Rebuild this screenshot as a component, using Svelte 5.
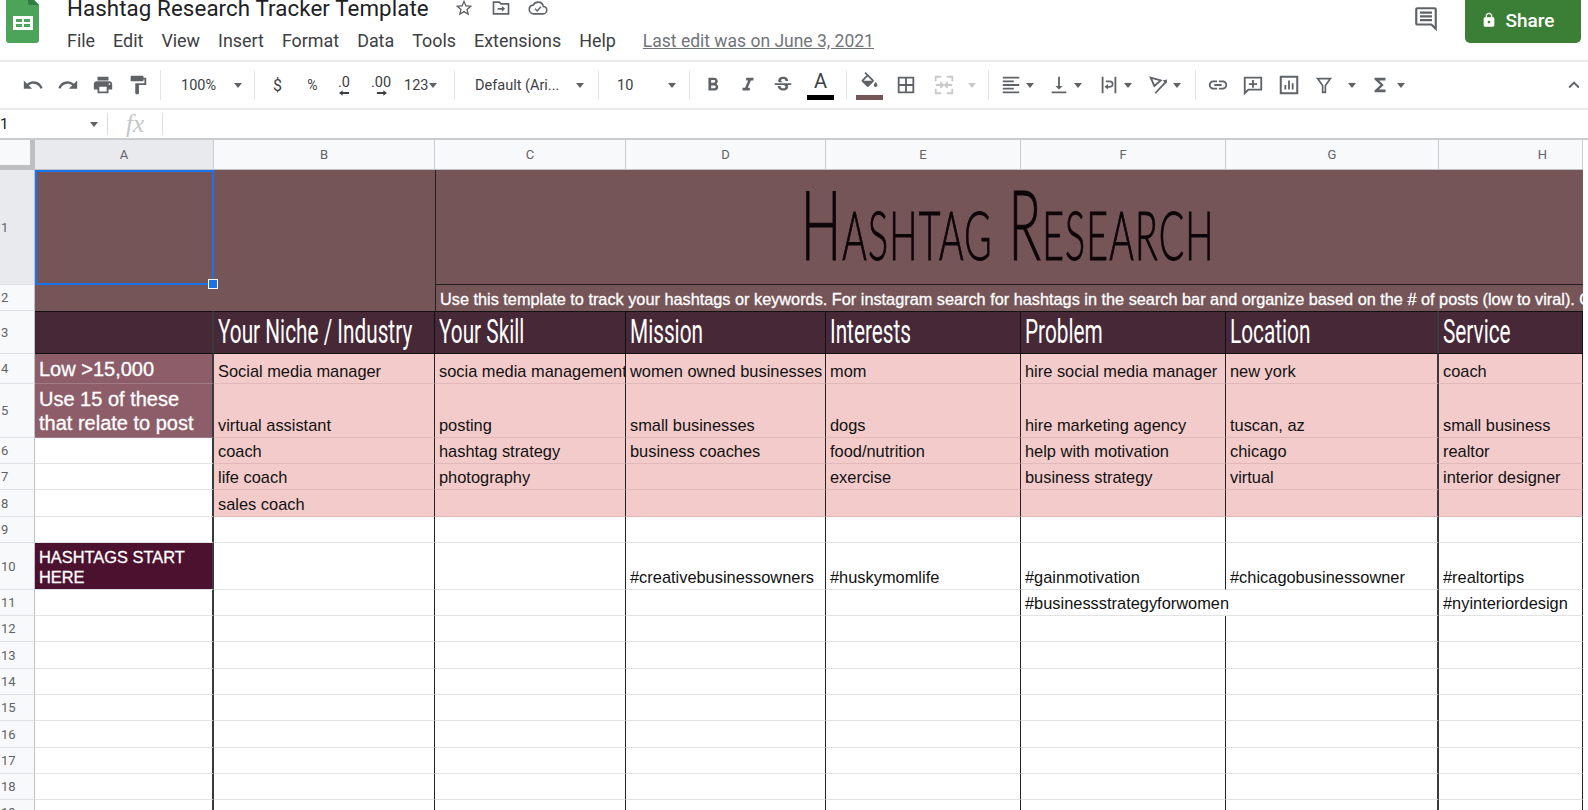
<script>
  const columns = ["A", "B", "C", "D", "E", "F", "G", "H"];
  const menu = ["File", "Edit", "View", "Insert", "Format", "Data", "Tools", "Extensions", "Help"];
  const heads = ["", "Your Niche / Industry", "Your Skill", "Mission", "Interests", "Problem", "Location", "Service"];

  const body = [
    { n: 4, cells: ["Low >15,000", "Social media manager", "socia media management", "women owned businesses", "mom", "hire social media manager", "new york", "coach"] },
    { n: 5, cells: ["Use 15 of these that relate to post", "virtual assistant", "posting", "small businesses", "dogs", "hire marketing agency", "tuscan, az", "small business"] },
    { n: 6, cells: ["", "coach", "hashtag strategy", "business coaches", "food/nutrition", "help with motivation", "chicago", "realtor"] },
    { n: 7, cells: ["", "life coach", "photography", "", "exercise", "business strategy", "virtual", "interior designer"] },
    { n: 8, cells: ["", "sales coach", "", "", "", "", "", ""] },
    { n: 9, cells: ["", "", "", "", "", "", "", ""] },
    { n: 10, cells: ["HASHTAGS START HERE", "", "", "#creativebusinessowners", "#huskymomlife", "#gainmotivation", "#chicagobusinessowner", "#realtortips"] },
    { n: 11, cells: ["", "", "", "", "", "#businessstrategyforwomen", "", "#nyinteriordesign"] }
  ];
  for (let n = 12; n <= 19; n++) body.push({ n, cells: ["", "", "", "", "", "", "", ""] });

  function cellClass(row, i) {
    let c = "cell";
    if (i === 0 || i === 6) c += " thick";
    if (row.n <= 8 && i > 0) c += " pink";
    if (row.n === 4 && i === 0) c += " dusty big";
    if (row.n === 5 && i === 0) c += " dusty big wrap";
    if (row.n === 10 && i === 0) c += " plum wrap";
    if (row.n === 11 && i === 5) c += " spill";
    return c;
  }
</script>

{#snippet caret()}
  <span class="caret"></span>
{/snippet}

{#snippet icon(d, cls = "")}
  <svg class="ico {cls}" viewBox="0 0 24 24"><path d={d} /></svg>
{/snippet}

<div class="app">
  <header class="top">
    <svg class="logo" viewBox="0 0 33 49">
      <path d="M3 0h19l11 11v35a3 3 0 0 1-3 3H3a3 3 0 0 1-3-3V3a3 3 0 0 1 3-3z" fill="#4ca45a" />
      <path d="M22 0l11 11H24a2 2 0 0 1-2-2z" fill="#2f7d3f" />
      <path d="M7 22h20v14H7z" fill="#fff" />
      <path d="M10 25h6v3h-6zM18 25h6v3h-6zM10 30h6v3h-6zM18 30h6v3h-6z" fill="#4ca45a" />
    </svg>
    <div class="doc">
      <div class="title-row">
        <span class="doc-title">Hashtag Research Tracker Template</span>
        <svg class="head-ico star" viewBox="0 0 24 24"><path d="M22 9.24l-7.19-.62L12 2 9.19 8.63 2 9.24l5.46 4.73L5.82 21 12 17.27 18.18 21l-1.63-7.03L22 9.24zM12 15.4l-3.76 2.27 1-4.28-3.32-2.88 4.38-.38L12 6.1l1.71 4.04 4.38.38-3.32 2.88 1 4.28L12 15.4z" /></svg>
        <svg class="head-ico move" viewBox="0 0 24 24"><path d="M3 5h7l2 2h9v12H3z" fill="none" stroke="#5f6368" stroke-width="2" /><path d="M8 12h5v-2.5l4 3.5-4 3.500V14H8z" /></svg>
        <svg class="head-ico cloud" viewBox="0 0 24 24"><path d="M19.350 10.040A7.490 7.490 0 0 0 12 4C9.110 4 6.600 5.640 5.350 8.040A5.994 5.994 0 0 0 0 14c0 3.310 2.690 6 6 6h13c2.760 0 5-2.240 5-5 0-2.640-2.050-4.780-4.650-4.960z" transform="translate(1.500 1.500) scale(.875)" fill="none" stroke="#5f6368" stroke-width="2.200" /><path d="M8.500 13l2.500 2.500 4.500-5" fill="none" stroke="#5f6368" stroke-width="1.800" /></svg>
      </div>
      <nav class="menu">
        {#each menu as item}
          <span>{item}</span>
        {/each}
        <span class="last-edit">Last edit was on June 3, 2021</span>
      </nav>
    </div>
    <svg class="comments" viewBox="0 0 24 24">
      <path d="M4 3h16a1 1 0 0 1 1 1v18l-4-4H4a1 1 0 0 1-1-1V4a1 1 0 0 1 1-1z" fill="none" stroke="#5f6368" stroke-width="2" />
      <path d="M6.500 7h11M6.500 10.500h11M6.500 14h11" stroke="#5f6368" stroke-width="2" />
    </svg>
    <div class="share">
      <svg viewBox="0 0 24 24"><path d="M18 8h-1V6c0-2.760-2.240-5-5-5S7 3.240 7 6v2H6c-1.100 0-2 .9-2 2v10c0 1.100.9 2 2 2h12c1.100 0 2-.9 2-2V10c0-1.100-.9-2-2-2zm-6 9c-1.100 0-2-.9-2-2s.9-2 2-2 2 .9 2 2-.9 2-2 2zm3.100-9H8.900V6c0-1.710 1.390-3.100 3.100-3.100 1.710 0 3.100 1.390 3.100 3.100v2z" /></svg>
      Share
    </div>
  </header>

  <div class="toolbar">
    <div class="btn">{@render icon("M12.5 8c-2.650 0-5.050.99-6.900 2.600L2 7v9h9l-3.620-3.620c1.390-1.160 3.160-1.880 5.120-1.880 3.540 0 6.550 2.310 7.600 5.500l2.370-.78C21.080 11.030 17.150 8 12.500 8z")}</div>
    <div class="btn">{@render icon("M18.400 10.600C16.550 8.990 14.150 8 11.500 8c-4.650 0-8.580 3.030-9.960 7.220L3.900 16c1.050-3.190 4.050-5.500 7.600-5.500 1.950 0 3.730.72 5.120 1.880L13 16h9V7l-3.600 3.600z")}</div>
    <div class="btn">{@render icon("M19 8H5c-1.660 0-3 1.340-3 3v6h4v4h12v-4h4v-6c0-1.660-1.340-3-3-3zm-3 11H8v-5h8v5zm3-7c-.55 0-1-.45-1-1s.45-1 1-1 1 .45 1 1-.45 1-1 1zm-1-9H6v4h12V3z")}</div>
    <div class="btn">{@render icon("M18 4V3c0-.55-.45-1-1-1H5c-.55 0-1 .45-1 1v4c0 .55.45 1 1 1h12c.55 0 1-.45 1-1V6h1v4H9v11c0 .55.45 1 1 1h2c.55 0 1-.45 1-1v-9h8V4h-3z")}</div>
    <i class="sep"></i>
    <div class="pick zoom-pick"><span>100%</span>{@render caret()}</div>
    <i class="sep"></i>
    <div class="btn txt">$</div>
    <div class="btn txt small">%</div>
    <div class="btn dec"><span>.0</span><svg viewBox="0 0 12 6"><path d="M0 3l4-3v2h7v2H4v2z" /></svg></div>
    <div class="btn dec wide"><span>.00</span><svg viewBox="0 0 12 6"><path d="M12 3L8 0v2H1v2h7v2z" /></svg></div>
    <div class="fmt"><span>123</span>{@render caret()}</div>
    <i class="sep"></i>
    <div class="pick font-pick"><span>Default (Ari...</span>{@render caret()}</div>
    <i class="sep"></i>
    <div class="pick size-pick"><span>10</span>{@render caret()}</div>
    <i class="sep"></i>
    <div class="btn">{@render icon("M15.600 10.790c.97-.67 1.650-1.770 1.650-2.790 0-2.260-1.750-4-4-4H7v14h7.040c2.090 0 3.710-1.700 3.710-3.790 0-1.520-.86-2.820-2.150-3.420zM10 6.500h3c.83 0 1.500.67 1.500 1.500s-.67 1.500-1.500 1.500h-3v-3zm3.500 9H10v-3h3.500c.83 0 1.500.67 1.500 1.500s-.67 1.500-1.500 1.500z")}</div>
    <div class="btn">{@render icon("M10 4v3h2.210l-3.420 8H6v3h8v-3h-2.210l3.420-8H18V4z")}</div>
    <div class="btn">{@render icon("M7.240 8.750c-.26-.48-.39-1.030-.39-1.670 0-.61.13-1.160.4-1.670.26-.5.63-.93 1.110-1.290.48-.35 1.050-.63 1.700-.83.66-.19 1.390-.29 2.180-.29.81 0 1.540.11 2.210.34.66.22 1.230.54 1.690.94.47.4.83.88 1.080 1.430.25.55.38 1.150.38 1.810h-3.010c0-.31-.05-.59-.15-.85-.09-.27-.24-.49-.44-.68-.2-.19-.45-.33-.75-.44-.3-.1-.66-.16-1.060-.16-.39 0-.74.04-1.030.13-.29.09-.53.21-.72.36-.19.16-.34.34-.44.55-.1.21-.15.43-.15.66 0 .48.25.88.74 1.210.38.25.77.48 1.410.7H7.390c-.05-.08-.11-.17-.15-.25zM21 12v-2H3v2h9.620c.18.07.4.14.55.2.37.17.66.34.87.51.21.17.35.36.43.57.07.2.11.43.11.69 0 .23-.05.45-.14.66-.09.2-.23.38-.42.53-.19.15-.42.26-.71.35-.29.08-.63.13-1.010.13-.43 0-.83-.04-1.180-.13s-.66-.23-.91-.42c-.25-.19-.45-.44-.59-.75-.14-.31-.25-.76-.25-1.210H6.400c0 .55.08 1.130.24 1.580.16.45.37.85.65 1.210.28.35.6.66.98.92.37.26.78.48 1.220.65.44.17.9.3 1.380.39.48.08.96.13 1.440.13.8 0 1.530-.09 2.180-.28s1.210-.45 1.670-.79c.46-.34.82-.77 1.070-1.270s.38-1.070.38-1.710c0-.6-.1-1.140-.31-1.610-.05-.11-.11-.23-.17-.33H21z")}</div>
    <div class="btn colour text-colour"><span>A</span><b></b></div>
    <i class="sep"></i>
    <div class="btn colour fill"><svg class="ico" viewBox="0 0 24 24"><path d="M16.560 8.940L7.620 0 6.210 1.410l2.380 2.380-5.150 5.150c-.59.59-.59 1.540 0 2.120l5.500 5.500c.29.29.68.44 1.060.44s.77-.15 1.060-.44l5.500-5.500c.59-.58.59-1.530 0-2.120zM5.210 10L10 5.210 14.790 10H5.210zM19 11.500s-2 2.170-2 3.500c0 1.100.9 2 2 2s2-.9 2-2c0-1.330-2-3.500-2-3.500z" /></svg><b></b></div>
    <div class="btn borders">{@render icon("M3 3v18h18V3H3zm8 16H5v-6h6v6zm0-8H5V5h6v6zm8 8h-6v-6h6v6zm0-8h-6V5h6v6z")}</div>
    <div class="btn merge">
      <svg class="ico" viewBox="0 0 24 24"><path d="M3 8V3h6M15 3h6v5M3 16v5h6M15 21h6v-5M3 12h6M21 12h-6M8 9l3 3-3 3M16 9l-3 3 3 3" fill="none" stroke="#c8c9cb" stroke-width="2" /></svg>
    </div>
    <div class="merge-caret">{@render caret()}</div>
    <i class="sep"></i>
    <div class="combo c-align">{@render icon("M15 15H3v2h12v-2zm0-8H3v2h12V7zM3 13h18v-2H3v2zm0 8h18v-2H3v2zM3 3v2h18V3H3z")}{@render caret()}</div>
    <div class="combo c-valign">{@render icon("M16 13h-3V3h-2v10H8l4 4 4-4zM4 19v2h16v-2H4z")}{@render caret()}</div>
    <div class="combo c-wrap">
      <svg class="ico" viewBox="0 0 24 24"><path d="M5 3v18M19 3v18" fill="none" stroke="#5f6368" stroke-width="2" /><path d="M8.500 8h4.500a3 3 0 0 1 0 6h-3" fill="none" stroke="#5f6368" stroke-width="1.800" /><path d="M11 11l-4 3 4 3z" /></svg>
      {@render caret()}
    </div>
    <div class="combo c-rotate">
      <svg class="ico" viewBox="0 0 24 24"><path d="M4 4l11 3-7 6z" fill="none" stroke="#5f6368" stroke-width="2" /><path d="M9 21L21 8" fill="none" stroke="#5f6368" stroke-width="2" /><path d="M22 6l-5 1 4 4z" /></svg>
      {@render caret()}
    </div>
    <i class="sep"></i>
    <div class="btn link">{@render icon("M3.900 12c0-1.710 1.390-3.100 3.100-3.100h4V7H7c-2.760 0-5 2.240-5 5s2.240 5 5 5h4v-1.900H7c-1.710 0-3.100-1.390-3.100-3.100zM8 13h8v-2H8v2zm9-6h-4v1.900h4c1.710 0 3.100 1.390 3.100 3.100s-1.390 3.100-3.100 3.100h-4V17h4c2.760 0 5-2.240 5-5s-2.240-5-5-5z")}</div>
    <div class="btn wide-36">
      <svg class="ico" viewBox="0 0 24 24"><path d="M3 4h18v13H7l-4 4z" fill="none" stroke="#5f6368" stroke-width="2" /><path d="M11 6.500h2V10h3.500v2H13v3h-2v-3H7.500v-2H11z" /></svg>
    </div>
    <div class="btn">
      <svg class="ico" viewBox="0 0 24 24"><path d="M3 3h18v18H3z" fill="none" stroke="#5f6368" stroke-width="2.200" /><path d="M7 12h2v5H7zM11 7h2v10h-2zM15 10h2v7h-2z" /></svg>
    </div>
    <div class="btn wide-36">
      <svg class="ico" viewBox="0 0 24 24"><path d="M5 5h14l-5.500 7.500V20h-3v-7.500z" fill="none" stroke="#5f6368" stroke-width="1.800" /></svg>
    </div>
    <div class="tail-caret">{@render caret()}</div>
    <div class="btn wide-36">{@render icon("M18 4H6v2l6.500 6L6 18v2h12v-3h-7l5-5-5-5h7z")}</div>
    <div class="sigma-caret">{@render caret()}</div>
    <div class="collapse">{@render icon("M12 8l-6 6 1.410 1.410L12 10.830l4.590 4.580L18 14z")}</div>
  </div>

  <div class="formula">
    <div class="name-box"><span>1</span>{@render caret()}</div>
    <i class="f-sep"></i>
    <span class="fx">fx</span>
    <i class="f-sep"></i>
  </div>

  <div class="sheet">
    <div class="corner"></div>
    {#each columns as col, i}
      <div class="col-head" class:active={i === 0} class:last={i === 7}>{col}</div>
    {/each}

    <div class="row-head active"><span>1</span></div>
    <div class="band selected"><i class="handle"></i></div>
    <div class="band"></div>
    <div class="band banner"><span>Hashtag Research</span></div>

    <div class="row-head"><span>2</span></div>
    <div class="band span-two"></div>
    <div class="band note"><span>Use this template to track your hashtags or keywords. For instagram search for hashtags in the search bar and organize based on the # of posts (low to viral). Once</span></div>

    <div class="row-head"><span>3</span></div>
    {#each heads as head, i}
      <div class="head-cell" class:thick={i === 0 || i === 6}><span>{head}</span></div>
    {/each}

    {#each body as row}
      <div class="row-head"><span>{row.n}</span></div>
      {#each row.cells as text, i}
        <div class={cellClass(row, i)}><span>{text}</span></div>
      {/each}
    {/each}
  </div>
</div>

<style>
  :global(body) {
    margin: 0;
    background: #fff;
  }

  .app {
    height: 810px;
    overflow: hidden;
    display: flex;
    flex-direction: column;
    font-family: Roboto, "Liberation Sans", sans-serif;
    color: #3c4043;
  }

  /* title bar, the window is cut off at the top */
  .top {
    height: 62px;
    flex-shrink: 0;
    display: flex;
    align-items: flex-start;
    padding-left: 6px;
    overflow: hidden;
    border-bottom: 2px solid #e8eaed;
    box-sizing: border-box;
  }

  .logo {
    width: 33px;
    height: 49px;
    margin-top: -6px;
    flex-shrink: 0;
  }

  .doc {
    margin-left: 27px;
    flex: 1;
  }

  .title-row {
    display: flex;
    align-items: center;
    height: 16px;
    margin-bottom: 14px;
    margin-left: 1px;
  }

  .doc-title {
    font-size: 22.3px;
    line-height: 16px;
    color: #202124;
    white-space: nowrap;
    letter-spacing: 0.1px;
  }

  .head-ico {
    width: 20px;
    height: 20px;
    fill: #5f6368;
    flex-shrink: 0;
  }

  .star {
    margin-left: 25px;
  }

  .move,
  .cloud {
    margin-left: 17px;
  }

  .menu {
    display: flex;
    gap: 18px;
    font-size: 17.9px;
    line-height: 22px;
    color: #3c4043;
    margin-left: 1px;
  }

  .last-edit {
    margin-left: 9px;
    font-size: 17.5px;
    color: #70757a;
    text-decoration: underline;
  }

  .comments {
    width: 26px;
    height: 26px;
    margin-top: 5px;
    margin-right: 26px;
    flex-shrink: 0;
  }

  .share {
    width: 116px;
    height: 51px;
    margin-top: -8px;
    margin-right: 7px;
    padding: 5px 10px 0 0;
    box-sizing: border-box;
    flex-shrink: 0;
    display: flex;
    align-items: center;
    justify-content: center;
    gap: 8px;
    background: #3b7e35;
    border-radius: 5px;
    color: #fff;
    font-size: 19px;
    font-weight: 500;
  }

  .share svg {
    width: 16px;
    height: 16px;
    fill: #fff;
  }

  /* toolbar */
  .toolbar {
    height: 48px;
    flex-shrink: 0;
    display: flex;
    align-items: center;
    padding-left: 15px;
    border-bottom: 2px solid #e8eaed;
    box-sizing: border-box;
    font-size: 14.5px;
  }

  .btn {
    width: 35px;
    height: 32px;
    flex-shrink: 0;
    display: flex;
    align-items: center;
    justify-content: center;
    position: relative;
  }

  .ico {
    width: 22px;
    height: 22px;
    fill: #5f6368;
    flex-shrink: 0;
  }

  .sep {
    width: 1px;
    height: 30px;
    margin: 0 5px;
    background: #e3e4e6;
    flex-shrink: 0;
  }

  .caret {
    display: inline-block;
    width: 0;
    height: 0;
    border-left: 4.500px solid transparent;
    border-right: 4.500px solid transparent;
    border-top: 5px solid #5f6368;
    flex-shrink: 0;
  }

  .pick {
    display: flex;
    align-items: center;
    justify-content: space-between;
    flex-shrink: 0;
    box-sizing: border-box;
    white-space: nowrap;
  }

  .zoom-pick {
    width: 83px;
    padding: 0 7px 0 15px;
  }

  .font-pick {
    width: 133px;
    padding: 0 9px 0 15px;
  }

  .size-pick {
    width: 80px;
    padding: 0 8px 0 13px;
  }

  .txt {
    font-size: 16px;
  }

  .small {
    font-size: 14px;
  }

  .dec {
    width: 28px;
    flex-direction: column;
    font-size: 14.500px;
    line-height: 15px;
  }

  .dec.wide {
    width: 46px;
  }

  .dec svg {
    width: 11px;
    height: 6px;
    fill: #3c4043;
  }

  .fmt {
    width: 45px;
    flex-shrink: 0;
    display: flex;
    align-items: center;
    gap: 1px;
  }

  .colour {
    flex-direction: column;
    justify-content: flex-start;
    font-size: 20px;
    line-height: 20px;
    padding-top: 2px;
    box-sizing: border-box;
  }

  .colour b {
    display: block;
    width: 27px;
    height: 5px;
    margin-top: 2px;
    background: #000;
  }

  .text-colour {
    width: 41px;
  }

  .text-colour span {
    height: 22px;
  }

  .fill {
    width: 34px;
  }

  .fill svg {
    width: 21px;
    height: 21px;
    margin-top: 1px;
  }

  .fill b {
    background: #765559;
    margin-top: 2px;
  }

  .borders {
    width: 39px;
  }

  .merge {
    width: 38px;
  }

  .merge-caret {
    width: 20px;
    flex-shrink: 0;
    display: flex;
    padding-left: 5px;
    box-sizing: border-box;
  }

  .merge-caret .caret {
    border-top-color: #c8c9cb;
  }

  .combo {
    display: flex;
    align-items: center;
    gap: 4px;
    flex-shrink: 0;
    box-sizing: border-box;
  }

  .c-align {
    width: 48px;
    padding-left: 6px;
  }

  .c-valign {
    width: 50px;
    padding-left: 6px;
  }

  .c-wrap {
    width: 52px;
    padding-left: 5.500px;
  }

  .c-rotate {
    width: 46px;
    padding-left: 3px;
  }

  .link {
    width: 34px;
  }

  .wide-36 {
    width: 36px;
  }

  .tail-caret {
    width: 20px;
    flex-shrink: 0;
    display: flex;
    padding-left: 6px;
    box-sizing: border-box;
  }

  .sigma-caret {
    display: flex;
    flex-shrink: 0;
    margin-left: -1.500px;
  }

  .collapse {
    margin-left: auto;
    margin-right: 3px;
    display: flex;
  }

  /* formula bar */
  .formula {
    height: 30px;
    flex-shrink: 0;
    display: flex;
    align-items: center;
    border-bottom: 2px solid #c9cbce;
    box-sizing: border-box;
  }

  .name-box {
    width: 107px;
    flex-shrink: 0;
    box-sizing: border-box;
    padding-right: 9px;
    display: flex;
    align-items: center;
    justify-content: space-between;
    font-size: 15px;
    color: #202124;
  }

  .f-sep {
    width: 1px;
    height: 22px;
    background: #dadce0;
    flex-shrink: 0;
  }

  .fx {
    width: 54px;
    text-align: center;
    font-family: "Liberation Serif", serif;
    font-style: italic;
    font-size: 25px;
    line-height: 26px;
    color: #c4c6c9;
  }

  /* the sheet */
  .sheet {
    flex: 1;
    min-height: 0;
    display: grid;
    grid-template-columns: 35px 179px 221px 191px 200px 195px 205px 213px 144px 5px;
    grid-template-rows: 30px 115px 26px 43px 30px 54px 26px 26px 27px 26px 47px 26px 26px 27px 26px 26px 27px 26px 26px 26px;
    font-family: "Liberation Sans", Arial, sans-serif;
  }

  .corner {
    background: #f8f9fa;
    border-right: 5px solid #bdbfc1;
    border-bottom: 5px solid #bdbfc1;
    box-sizing: border-box;
  }

  .col-head {
    display: flex;
    align-items: center;
    justify-content: center;
    background: #f8f9fa;
    border-right: 1px solid #c9cbce;
    border-bottom: 1px solid #c0c2c5;
    box-sizing: border-box;
    font-family: Roboto, sans-serif;
    font-size: 13px;
    color: #5f6368;
  }

  .col-head.active {
    background: #e8eaed;
  }

  /* the H column runs on past the edge of the crop, so its letter sits right of centre */
  .col-head.last {
    padding-left: 64px;
  }

  .row-head {
    grid-column-start: 1;
    display: flex;
    align-items: center;
    padding-left: 1px;
    background: #f8f9fa;
    border-right: 1px solid #bfc1c4;
    border-bottom: 1px solid #dfe1e4;
    box-sizing: border-box;
    font-family: Roboto, sans-serif;
    font-size: 13px;
    color: #5f6368;
    overflow: hidden;
  }

  .row-head.active {
    background: #e8eaed;
  }

  .band {
    background: #765559;
    box-sizing: border-box;
    position: relative;
  }

  .selected {
    border: 2px solid #1a73e8;
  }

  .handle {
    position: absolute;
    right: -6px;
    bottom: -6px;
    width: 8px;
    height: 8px;
    background: #1a73e8;
    border: 1px solid #fff;
    z-index: 2;
  }

  .banner {
    grid-column: 4 / span 6;
    border-left: 1px solid #222;
    border-bottom: 1px solid #222;
    display: flex;
    align-items: center;
    justify-content: center;
    color: #0c0608;
  }

  .banner span {
    display: inline-block;
    font-family: Lato, sans-serif;
    font-weight: 300;
    font-size: 96px;
    font-variant: small-caps;
    letter-spacing: 2px;
    -webkit-text-stroke: 1px #0c0608;
    line-height: 100px;
    white-space: nowrap;
    transform: scaleX(0.56);
    margin: -9px 4px 0 0;
  }

  .span-two {
    grid-column: 2 / span 2;
  }

  .note {
    grid-column: 4 / span 6;
    border-left: 1px solid #222;
    display: flex;
    align-items: flex-end;
    padding: 0 0 2px 4px;
    overflow: hidden;
    color: #fff;
    font-size: 16.3px;
    -webkit-text-stroke: 0.3px #fff;
    line-height: 20px;
    white-space: nowrap;
  }

  .head-cell {
    background: #472837;
    border-top: 1px solid #111;
    border-bottom: 1px solid #111;
    border-right: 1px solid #111;
    box-sizing: border-box;
    display: flex;
    align-items: center;
    padding-left: 4px;
    color: #fff;
    font-family: Roboto, sans-serif;
    font-size: 33.5px;
    white-space: nowrap;
  }

  .head-cell span {
    display: inline-block;
    transform: scaleX(0.62);
    transform-origin: left center;
    margin-top: -2px;
  }

  .cell {
    border-right: 1px solid #222;
    border-bottom: 1px solid #e2e3e3;
    box-sizing: border-box;
    display: flex;
    align-items: flex-end;
    padding: 0 3px 2px 4px;
    font-size: 16.4px;
    line-height: 20px;
    color: #111;
    white-space: nowrap;
    min-width: 0;
  }

  .thick {
    border-right-width: 2px;
    border-right-color: #3a3a3a;
  }

  .pink {
    background: #f3cbcb;
    border-bottom-color: #e0baba;
  }

  .dusty {
    background: #8d5e6a;
    border-bottom-color: #a07a84;
    color: #fff;
    -webkit-text-stroke: 0.3px #fff;
  }

  .big {
    font-size: 20px;
    line-height: 24px;
    padding-bottom: 2px;
  }

  .plum {
    background: #4c112e;
    color: #fff;
    line-height: 20px;
    padding-bottom: 2px;
    -webkit-text-stroke: 0.3px #fff;
  }

  .wrap {
    white-space: normal;
  }

  .spill {
    border-right-color: transparent;
  }
</style>
